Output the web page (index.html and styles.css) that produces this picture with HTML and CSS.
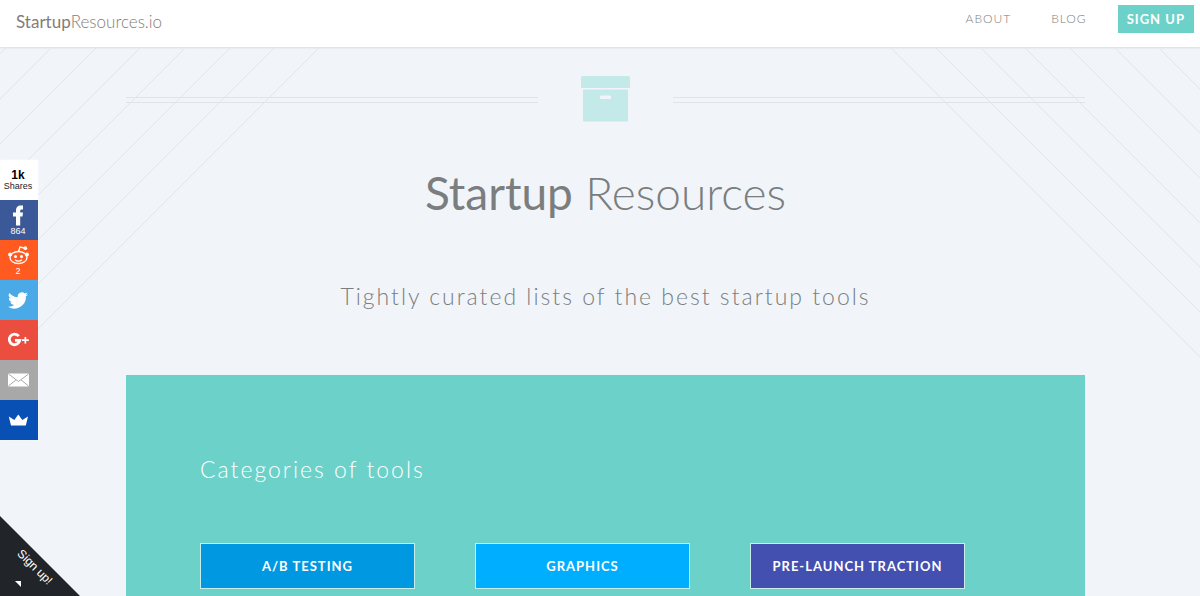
FILE: index.html
```html
<!DOCTYPE html>
<html lang="en">
<head>
    <meta charset="UTF-8">
    <meta name="viewport" content="width=device-width, initial-scale=1.0">
    <title>Startup Resources</title>
    <link rel="stylesheet" href="styles.css">
</head>
<body>
    <header class="navbar">
        <a class="brand" href="#"><b>Startup</b>Resources.io</a>
        <nav class="nav-links">
            <a href="#about">About</a>
            <a href="#blog">Blog</a>
            <a class="nav-signup" href="#signup">Sign up</a>
        </nav>
    </header>

    <div class="page">
        <!-- diagonal stripes in both corners -->
        <svg class="stripes stripes-left" width="330" height="330" viewBox="0 0 330 330" aria-hidden="true">
            <path d="M7 0L0 7M52 0L0 52M97 0L0 97M141 0L0 141M186 0L0 186M231 0L0 231M275 0L0 275M320 0L0 320"/>
        </svg>
        <svg class="stripes stripes-right" width="310" height="310" viewBox="0 0 310 310" aria-hidden="true">
            <path d="M0 0L310 310M45 0L310 265M90 0L310 220M134 0L310 176M179 0L310 131M224 0L310 86M268 0L310 42"/>
        </svg>

        <main>
            <div class="divider">
                <span class="rule"></span>
                <svg width="49" height="48" viewBox="0 0 49 48" aria-hidden="true">
                    <rect width="49" height="12" rx="1.5"/>
                    <path fill-rule="evenodd" d="M3 13.500H46A1 1 0 0 1 47 14.500V44.500A1 1 0 0 1 46 45.500H3A1 1 0 0 1 2 44.500V14.500A1 1 0 0 1 3 13.500ZM20.500 19.500A1.500 1.500 0 0 0 20.500 23H28.500A1.500 1.500 0 0 0 28.500 19.500Z"/>
                </svg>
                <span class="rule"></span>
            </div>

            <h1><b>Startup</b> Resources</h1>
            <p class="tagline">Tightly curated lists of the best startup tools</p>

            <section class="categories">
                <h2>Categories of tools</h2>
                <div class="category-grid">
                    <a class="category testing" href="#">A/B Testing</a>
                    <a class="category graphics" href="#">Graphics</a>
                    <a class="category traction" href="#">Pre-launch traction</a>
                </div>
            </section>
        </main>
    </div>

    <aside class="share-bar">
        <div class="share-total"><b>1k</b>Shares</div>
        <a class="facebook" href="#" aria-label="Facebook">
            <svg width="22" height="21" viewBox="0 0 22 21"><path d="M9 20.500V11.500H6V7.500H9V5.500C9 2 11 .5 13.500 .5H16V4.500H14.800C13.500 4.500 13.200 5 13.200 6V7.500H16L15.500 11.500H13.200V20.500Z"/></svg>
            864
        </a>
        <a class="reddit" href="#" aria-label="Reddit">
            <svg width="22" height="21" viewBox="0 0 22 21">
                <g fill="none" stroke="#fff" stroke-width="1.300">
                    <ellipse cx="11.500" cy="12.500" rx="8.500" ry="6"/>
                    <path d="M11.500 6.500L13 2L17.500 3M8 14.800Q11.500 17.500 15 14.800"/>
                </g>
                <circle cx="18.300" cy="3.200" r="1.900"/><circle cx="3.100" cy="9.500" r="2"/><circle cx="19.900" cy="9.500" r="2"/>
                <circle cx="8.500" cy="11.500" r="1.500"/><circle cx="14.500" cy="11.500" r="1.500"/>
            </svg>
            2
        </a>
        <a class="twitter" href="#" aria-label="Twitter">
            <svg width="20" height="17" viewBox="0 0 24 20"><path d="M24 2.400a10 10 0 0 1-2.800.8A5 5 0 0 0 23.300.5a10 10 0 0 1-3.100 1.200A4.920 4.920 0 0 0 11.800 6.200 14 14 0 0 1 1.700 1a4.920 4.920 0 0 0 1.500 6.600A5 5 0 0 1 1 7a4.930 4.930 0 0 0 3.900 4.900 5 5 0 0 1-2.200.1 4.930 4.930 0 0 0 4.600 3.400A9.900 9.900 0 0 1 0 17.500 14 14 0 0 0 21.500 5a10 10 0 0 0 2.500-2.600Z"/></svg>
        </a>
        <a class="google" href="#" aria-label="Google Plus">
            <svg width="22" height="16" viewBox="0 0 22 16">
                <path d="M11.800 4.200A5.300 5.300 0 1 0 12.800 8.300H8" fill="none" stroke="#fff" stroke-width="2.800"/>
                <path d="M17.500 5H19.200V7.200H21.800V9H19.200V11.500H17.500V9H15V7.200H17.500Z"/>
            </svg>
        </a>
        <a class="email" href="#" aria-label="Email">
            <svg width="22" height="14" viewBox="0 0 22 14">
                <rect x="1" y=".5" width="21" height="13" rx="1"/>
                <path d="M1.500 1L11.500 8.500L21.500 1M1.500 13L9 6.800M21.500 13L14 6.800" fill="none" stroke="#a8a8a8"/>
            </svg>
        </a>
        <a class="sumo" href="#" aria-label="Sumo">
            <svg width="20" height="12" viewBox="0 0 20 12"><path d="M3 11.500L.8 2.500L6.300 6L10.300 .5L14.300 6L20 2.500L17.800 11.500Z"/></svg>
        </a>
    </aside>

    <a class="corner" href="#signup">
        <span>Sign up!</span>
        <svg width="6" height="6" viewBox="0 0 6 6" aria-hidden="true"><path d="M0 0H6V6Z"/></svg>
    </a>
</body>
</html>
```

FILE: styles.css
```css
* {
    box-sizing: border-box;
}
body {
    margin: 0;
    font-family: Lato, "Liberation Sans", sans-serif;
    font-weight: 300;
    color: #7a7e7e;
    background-color: #f1f5fa;
}
a {
    color: inherit;
    text-decoration: none;
}
h1, h2, p {
    margin: 0;
    font-weight: 300;
}

/* top bar */
.navbar {
    display: flex;
    justify-content: space-between;
    align-items: flex-start;
    height: 47px;
    padding: 5px 6px 0 16px;
    background-color: #fff;
    box-shadow: 0 1px 2px rgba(0, 0, 0, 0.1);
    position: relative;
}
.brand {
    font-size: 17px;
    line-height: 34px;
    color: #857c77;
}
.nav-links {
    display: flex;
    font-size: 12px;
    line-height: 28px;
    letter-spacing: 1px;
    text-transform: uppercase;
}
.nav-links a {
    margin-left: 40px;
}
.nav-links .nav-signup {
    margin-left: 31px;
    padding: 0 9px;
    font-size: 13px;
    font-weight: 700;
    color: #fff;
    background-color: #6cd1c9;
}

/* page body */
.page {
    position: relative;
}
.stripes {
    position: absolute;
    top: 0;
    fill: none;
    stroke: #e2e6e8;
}
.stripes-left {
    left: 0;
}
.stripes-right {
    right: 0;
}
main {
    position: relative;
    padding: 29px 115px 0 126px;
    text-align: center;
}
.divider {
    display: flex;
    align-items: center;
    gap: 43px;
}
.divider svg {
    fill: #c3eae8;
}
.rule {
    flex: 1;
    height: 6px;
    border-top: 1px solid #e0e4e8;
    border-bottom: 1px solid #e0e4e8;
}
h1 {
    margin-top: 39px;
    font-size: 46px;
    line-height: 60px;
}
.tagline {
    margin-top: 57px;
    font-size: 23px;
    line-height: 32px;
    letter-spacing: 2px;
}

/* categories */
.categories {
    margin-top: 63px;
    padding: 78px 120px 7px 74px;
    background-color: #6cd1c9;
    color: #fff;
    text-align: left;
}
h2 {
    font-size: 23px;
    line-height: 32px;
    letter-spacing: 2px;
}
.category-grid {
    display: grid;
    grid-template-columns: repeat(3, 1fr);
    gap: 60px;
    margin-top: 58px;
}
.category {
    border: 1px solid #c8eeea;
    font-size: 13px;
    font-weight: 700;
    line-height: 44px;
    letter-spacing: 1px;
    text-align: center;
    text-transform: uppercase;
}
.testing {
    background-color: #0099e1;
}
.graphics {
    background-color: #00aeff;
}
.traction {
    background-color: #4350af;
}

/* share buttons */
.share-bar {
    position: fixed;
    top: 160px;
    left: 0;
    width: 38px;
    font-family: "Liberation Sans", Arial, sans-serif;
    font-size: 9px;
    font-weight: 400;
    line-height: 10px;
    box-shadow: 0 0 2px rgba(255, 255, 255, 0.8);
}
.share-bar a,
.share-total {
    display: flex;
    flex-direction: column;
    align-items: center;
    justify-content: center;
    height: 40px;
    padding-right: 2px;
    color: #fff;
}
.share-bar svg {
    fill: #fff;
}
.share-bar .share-total {
    color: #222;
    background-color: #fff;
}
.share-total b {
    font-size: 12px;
    line-height: 12px;
    color: #000;
}
.facebook {
    background-color: #3b5998;
}
.reddit {
    background-color: #ff5a1f;
}
.twitter {
    background-color: #4aaae7;
}
.google {
    background-color: #eb4e3f;
}
.email {
    background-color: #a8a8a8;
}
.sumo {
    background-color: #0850b4;
}

/* corner ribbon */
.corner {
    position: fixed;
    left: 0;
    bottom: 0;
    width: 80px;
    height: 80px;
    background-color: #212428;
    clip-path: polygon(0 0, 100% 100%, 0 100%);
    font-family: "Liberation Sans", Arial, sans-serif;
    font-size: 12px;
    font-weight: 400;
    line-height: 14px;
    color: #fff;
}
.corner span {
    position: absolute;
    left: 10px;
    top: 44px;
    width: 50px;
    text-align: center;
    transform: rotate(45deg);
}
.corner svg {
    position: absolute;
    left: 15px;
    bottom: 9px;
    fill: #fff;
}
```
